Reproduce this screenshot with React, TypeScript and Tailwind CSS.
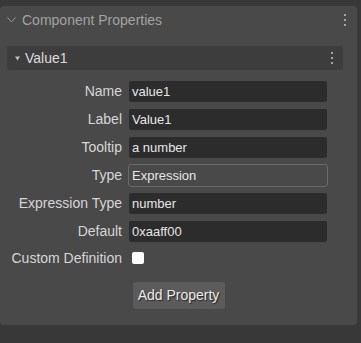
import React from "react";

// ── Small drawings ────────────────────────────────────────────────

function Kebab() {
  return (
    <div className="flex flex-col gap-[2.5px]">
      <span className="w-[2.5px] h-[2.5px] rounded-full bg-[#c4c4c4]" />
      <span className="w-[2.5px] h-[2.5px] rounded-full bg-[#c4c4c4]" />
      <span className="w-[2.5px] h-[2.5px] rounded-full bg-[#c4c4c4]" />
    </div>
  );
}

// ── Rows ──────────────────────────────────────────────────────────

const fields = [
  { label: "Name", value: "value1" },
  { label: "Label", value: "Value1" },
  { label: "Tooltip", value: "a number" },
  { label: "Type", value: "Expression", select: true },
  { label: "Expression Type", value: "number" },
  { label: "Default", value: "0xaaff00" },
];

function FieldRow({ label, value, select }: { label: string; value: string; select?: boolean }) {
  return (
    <div className="flex items-center h-[21px]">
      <div className="w-[122px] text-right text-[14px] text-[#d6d6d6]">{label}</div>
      <div
        className={
          select
            ? "ml-[6px] w-[200px] h-[23px] flex items-center pl-[3px] rounded-[3px] border border-[#6a6a6a] bg-[#494949] text-[13px] text-[#e6e6e6]"
            : "ml-[7px] w-[198px] h-[21px] flex items-center pl-[3px] rounded-[2px] bg-[#2c2c2c] text-[13px] text-[#e6e6e6]"
        }
      >
        {value}
      </div>
    </div>
  );
}

export default function App() {
  return (
    <div className="w-[361px] h-[343px] bg-[#383838] pt-[6px] font-['Liberation_Sans',Arial,sans-serif]">
      <div className="w-[357px] h-[319px] bg-[#494949] rounded-[4px] flex flex-col">
        {/* Header */}
        <div className="h-[28px] flex items-center pl-[7px] pr-[11px]">
          <svg width="9" height="6" viewBox="0 0 9 6" className="shrink-0">
            <polyline points="0.5,0.5 4.5,5 8.5,0.5" fill="none" stroke="#9a9a9a" strokeWidth="1" />
          </svg>
          <span className="ml-[6px] text-[14px] text-[#a2a2a2]">Component Properties</span>
          <div className="ml-auto">
            <Kebab />
          </div>
        </div>

        {/* Value1 group */}
        <div className="mt-[12px] ml-[7px] mr-[14px] h-[24px] bg-[#3d3d3d] rounded-[3px] flex items-center pl-[8px] pr-[10px]">
          <svg width="5" height="5" viewBox="0 0 5 5" className="shrink-0">
            <polygon points="0,0.5 5,0.5 2.5,4.5" fill="#bdbdbd" />
          </svg>
          <span className="ml-[5px] text-[14px] text-[#dedede]">Value1</span>
          <div className="ml-auto">
            <Kebab />
          </div>
        </div>

        {/* Properties */}
        <div className="mt-[11px] flex flex-col gap-[7px]">
          {fields.map((f) => (
            <FieldRow key={f.label} label={f.label} value={f.value} select={f.select} />
          ))}
          <div className="flex items-center h-[18px]">
            <div className="w-[122px] text-right text-[14px] text-[#d6d6d6]">Custom Definition</div>
            <span className="ml-[10px] w-[12px] h-[12px] rounded-[2px] bg-white" />
          </div>
        </div>

        <div className="mt-[15px] flex justify-center">
          <button className="w-[92px] h-[27px] rounded-[3px] bg-[#5b5b5b] text-[14px] text-[#ececec] [text-shadow:1px_1px_1px_#222]">
            Add Property
          </button>
        </div>
      </div>
    </div>
  );
}
